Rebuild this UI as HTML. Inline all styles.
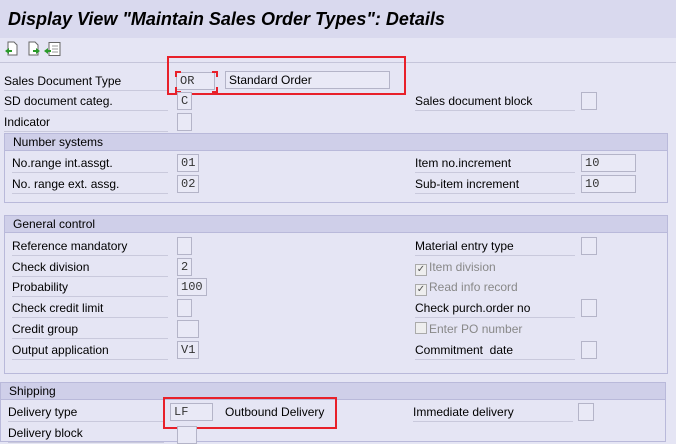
<!DOCTYPE html><html><head><style>
body{margin:0;width:676px;height:435px;overflow:hidden;background:#e5e5f4;font-family:"Liberation Sans",Tahoma,sans-serif;font-size:12px;color:#000;position:relative}
.a{position:absolute;white-space:nowrap}
.t{left:0;top:0;width:676px;height:38px;background:#d9d9ee;font-weight:bold;font-style:italic;font-size:18px;line-height:38px;padding-left:8px;box-sizing:border-box}
.l{line-height:18px;border-bottom:1px solid #c9c9dc}
.b{border:1px solid #b4b4c8;background:#e9e9f6;font-family:"Liberation Mono",monospace;font-size:12px;line-height:16px;padding-left:3px;box-sizing:border-box;height:18px;color:#333}
.g{border:1px solid #b9b9da;box-sizing:border-box}
.gh{background:#cfcfe9;height:17px;line-height:17px;padding-left:8px;box-sizing:border-box;border-bottom:1px solid #b9b9da}
.r{border:2px solid #e8202a}
.d{color:#888}
.cb{display:inline-block;width:10px;height:10px;border:1px solid #aaa;background:#eee;vertical-align:-1px;margin-right:2px;font-size:10px;line-height:10px;text-align:center;color:#555}
.c{position:absolute;width:4px;height:4px;border-color:#e8202a;border-style:solid;border-width:0}
</style></head><body>
<div class="a t">Display View "Maintain Sales Order Types": Details</div>
<div class="a" style="top:62px;left:0;width:676px;border-top:1px solid #c5c5da"></div>
<svg class="a" style="left:4px;top:41px" width="58" height="16">
<path d="M4 1h6l3 3v10H4z" fill="#fff" stroke="#666"/><path d="M1 10l4-3v2h3v2H5v2z" fill="#2a9a2a"/>
<path d="M25 1h6l3 3v10H25z" fill="#fff" stroke="#666"/><path d="M36 10l-4-3v2h-3v2h3v2z" fill="#2a9a2a"/>
<rect x="45" y="1.5" width="11" height="13" fill="#fff" stroke="#666"/><path d="M48 5h6M48 8h6M48 11h6" stroke="#999"/><path d="M40 10l4-3v2h3v2h-3v2z" fill="#2a9a2a"/>
</svg>

<div class="a l" style="left:4px;top:72px;width:164px">Sales Document Type</div>
<div class="a b" style="left:176px;top:72px;width:39px">OR</div>
<div class="c" style="left:175px;top:71px;border-width:2px 0 0 2px"></div>
<div class="c" style="left:212px;top:71px;border-width:2px 2px 0 0"></div>
<div class="c" style="left:175px;top:87px;border-width:0 0 2px 2px"></div>
<div class="c" style="left:212px;top:87px;border-width:0 2px 2px 0"></div>
<div class="a b" style="left:225px;top:71px;width:165px;font-family:'Liberation Sans',sans-serif;color:#000">Standard Order</div>
<div class="a r" style="left:167px;top:56px;width:235px;height:35px"></div>
<div class="a l" style="left:4px;top:92px;width:164px">SD document categ.</div>
<div class="a b" style="left:177px;top:92px;width:15px">C</div>
<div class="a l" style="left:415px;top:92px;width:160px">Sales document block</div>
<div class="a b" style="left:581px;top:92px;width:16px"></div>
<div class="a l" style="left:4px;top:113px;width:164px">Indicator</div>
<div class="a b" style="left:177px;top:113px;width:15px"></div>

<div class="a g" style="left:4px;top:133px;width:664px;height:70px"><div class="gh">Number systems</div></div>
<div class="a l" style="left:12px;top:154px;width:156px">No.range int.assgt.</div>
<div class="a b" style="left:177px;top:154px;width:22px">01</div>
<div class="a l" style="left:415px;top:154px;width:160px">Item no.increment</div>
<div class="a b" style="left:581px;top:154px;width:55px">10</div>
<div class="a l" style="left:12px;top:175px;width:156px">No. range ext. assg.</div>
<div class="a b" style="left:177px;top:175px;width:22px">02</div>
<div class="a l" style="left:415px;top:175px;width:160px">Sub-item increment</div>
<div class="a b" style="left:581px;top:175px;width:55px">10</div>

<div class="a g" style="left:4px;top:215px;width:664px;height:159px"><div class="gh">General control</div></div>
<div class="a l" style="left:12px;top:237px;width:156px">Reference mandatory</div>
<div class="a b" style="left:177px;top:237px;width:15px"></div>
<div class="a l" style="left:415px;top:237px;width:160px">Material entry type</div>
<div class="a b" style="left:581px;top:237px;width:16px"></div>
<div class="a l" style="left:12px;top:258px;width:156px">Check division</div>
<div class="a b" style="left:177px;top:258px;width:15px">2</div>
<div class="a d" style="left:415px;top:258px;line-height:18px"><span class="cb">✓</span>Item division</div>
<div class="a l" style="left:12px;top:278px;width:156px">Probability</div>
<div class="a b" style="left:177px;top:278px;width:30px">100</div>
<div class="a d" style="left:415px;top:278px;line-height:18px"><span class="cb">✓</span>Read info record</div>
<div class="a l" style="left:12px;top:299px;width:156px">Check credit limit</div>
<div class="a b" style="left:177px;top:299px;width:15px"></div>
<div class="a l" style="left:415px;top:299px;width:160px">Check purch.order no</div>
<div class="a b" style="left:581px;top:299px;width:16px"></div>
<div class="a l" style="left:12px;top:320px;width:156px">Credit group</div>
<div class="a b" style="left:177px;top:320px;width:22px"></div>
<div class="a d" style="left:415px;top:320px;line-height:18px"><span class="cb"></span>Enter PO number</div>
<div class="a l" style="left:12px;top:341px;width:156px">Output application</div>
<div class="a b" style="left:177px;top:341px;width:22px">V1</div>
<div class="a l" style="left:415px;top:341px;width:160px">Commitment &nbsp;date</div>
<div class="a b" style="left:581px;top:341px;width:16px"></div>

<div class="a g" style="left:0px;top:382px;width:666px;height:60px"><div class="gh">Shipping</div></div>
<div class="a l" style="left:8px;top:403px;width:156px">Delivery type</div>
<div class="a b" style="left:170px;top:403px;width:43px">LF</div>
<div class="a" style="left:225px;top:403px;line-height:18px">Outbound Delivery</div>
<div class="a r" style="left:163px;top:397px;width:170px;height:28px"></div>
<div class="a l" style="left:413px;top:403px;width:160px">Immediate delivery</div>
<div class="a b" style="left:578px;top:403px;width:16px"></div>
<div class="a l" style="left:8px;top:424px;width:156px">Delivery block</div>
<div class="a b" style="left:177px;top:426px;width:20px"></div>
</body></html>
